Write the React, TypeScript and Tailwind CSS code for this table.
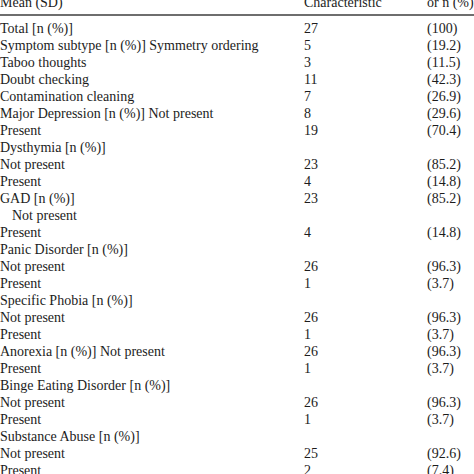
const rows: [string, string, string, boolean?][] = [
  ["Total [n (%)]", "27", "(100)"],
  ["Symptom subtype [n (%)] Symmetry ordering", "5", "(19.2)"],
  ["Taboo thoughts", "3", "(11.5)"],
  ["Doubt checking", "11", "(42.3)"],
  ["Contamination cleaning", "7", "(26.9)"],
  ["Major Depression [n (%)] Not present", "8", "(29.6)"],
  ["Present", "19", "(70.4)"],
  ["Dysthymia [n (%)]", "", ""],
  ["Not present", "23", "(85.2)"],
  ["Present", "4", "(14.8)"],
  ["GAD [n (%)]", "23", "(85.2)"],
  ["Not present", "", "", true],
  ["Present", "4", "(14.8)"],
  ["Panic Disorder [n (%)]", "", ""],
  ["Not present", "26", "(96.3)"],
  ["Present", "1", "(3.7)"],
  ["Specific Phobia [n (%)]", "", ""],
  ["Not present", "26", "(96.3)"],
  ["Present", "1", "(3.7)"],
  ["Anorexia [n (%)] Not present", "26", "(96.3)"],
  ["Present", "1", "(3.7)"],
  ["Binge Eating Disorder [n (%)]", "", ""],
  ["Not present", "26", "(96.3)"],
  ["Present", "1", "(3.7)"],
  ["Substance Abuse [n (%)]", "", ""],
  ["Not present", "25", "(92.6)"],
  ["Present", "2", "(7.4)"],
]

export default function App() {
  return (
    <div className="w-[474px] h-[474px] overflow-hidden bg-white text-[#1c1c1c] text-[14px] font-['Liberation_Serif',serif]">
      <div className="grid grid-cols-[304px_123px_1fr] h-[17px] leading-[17px] -mt-[6px] whitespace-nowrap">
        <div>Mean (SD)</div>
        <div>Characteristic</div>
        <div>or n (%)</div>
      </div>
      <div className="mt-[3px] h-[2px] bg-[#6e6e6e]" />
      <div className="mt-[4px]">
        {rows.map(([a, b, c, indent], i) => (
          <div key={i} className="grid grid-cols-[304px_123px_1fr] h-[17px] leading-[17px] whitespace-nowrap">
            <div className={indent ? "pl-[12px]" : ""}>{a}</div>
            <div>{b}</div>
            <div>{c}</div>
          </div>
        ))}
      </div>
    </div>
  )
}
